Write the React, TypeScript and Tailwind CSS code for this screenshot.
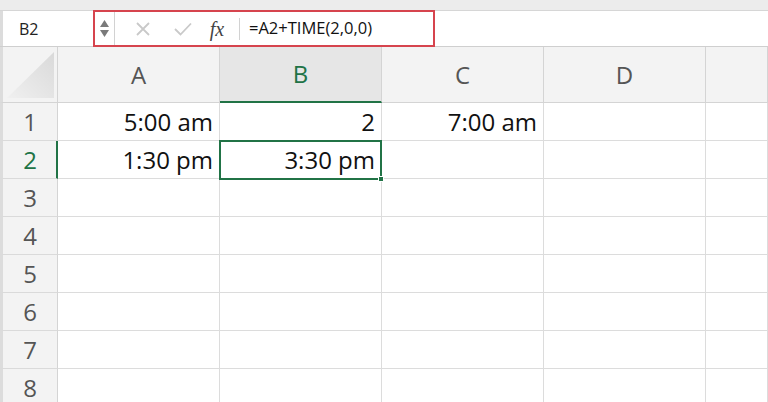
import React from "react";

const cols = ["A", "B", "C", "D", ""];
const rows: string[][] = [
  ["5:00 am", "2", "7:00 am", "", ""],
  ["1:30 pm", "3:30 pm", "", "", ""],
  ["", "", "", "", ""],
  ["", "", "", "", ""],
  ["", "", "", "", ""],
  ["", "", "", "", ""],
  ["", "", "", "", ""],
  ["", "", "", "", ""],
];

export default function App() {
  return (
    <div
      className="w-[768px] h-[402px] overflow-hidden bg-white flex flex-col"
      style={{ fontFamily: '"Open Sans", "Noto Sans", sans-serif' }}
    >
      {/* top strip */}
      <div className="h-[11px] shrink-0 bg-[#ececec] border-b border-[#d6d6d6]" />
      {/* formula bar */}
      <div className="h-[36px] shrink-0 flex bg-white border-b border-[#cfcfcf]">
        <div className="w-[93px] shrink-0 flex items-center pl-[16px] text-[16px] text-[#222] border-l-[3px] border-[#dcdcdc]">
          B2
        </div>
        <div className="w-[342px] shrink-0 flex items-center border-2 border-[#d6444e] -mt-px h-[37px]">
          <div className="w-[20px] h-full flex flex-col items-center justify-center gap-[3px] border-r border-[#d2d2d2]">
            <svg width="9" height="7" viewBox="0 0 9 7">
              <path d="M4.5 0 L9 7 L0 7 Z" fill="#7a7a7a" />
            </svg>
            <svg width="9" height="7" viewBox="0 0 9 7">
              <path d="M0 0 L9 0 L4.5 7 Z" fill="#7a7a7a" />
            </svg>
          </div>
          <div className="w-[40px] flex items-center justify-center ml-[8px]">
            <svg width="16" height="16" viewBox="0 0 16 16">
              <path d="M2 2 L14 14 M14 2 L2 14" stroke="#c9c9c9" strokeWidth="1.8" />
            </svg>
          </div>
          <div className="w-[40px] flex items-center justify-center">
            <svg width="18" height="14" viewBox="0 0 18 14">
              <path d="M1 7 L6.5 12.5 L17 1.5" stroke="#c9c9c9" strokeWidth="1.8" fill="none" />
            </svg>
          </div>
          <div
            className="w-[28px] flex items-center justify-center text-[20px] italic text-[#444]"
            style={{ fontFamily: '"Liberation Serif", "DejaVu Serif", serif' }}
          >
            fx
          </div>
          <div className="w-px h-[22px] bg-[#d2d2d2] ml-[8px]" />
          <div className="pl-[9px] text-[16.5px] text-[#111] whitespace-nowrap">=A2+TIME(2,0,0)</div>
        </div>
        <div className="flex-1" />
      </div>
      {/* grid */}
      <div className="flex-1 grid grid-cols-[58px_162px_162px_162px_162px_1fr] auto-rows-[38px] grid-rows-[56px] content-start">
        {/* corner */}
        <div className="bg-[#f3f3f3] border-l-[3px] border-[#dcdcdc] border-r border-r-[#d4d4d4] border-b border-b-[#d4d4d4] flex items-center justify-center">
          <svg width="47" height="46" viewBox="0 0 47 46">
            <defs>
              <linearGradient id="g" x1="0" y1="1" x2="1" y2="0">
                <stop offset="0" stopColor="#f0f0f0" />
                <stop offset="1" stopColor="#d9d9d9" />
              </linearGradient>
            </defs>
            <path d="M47 0 L47 46 L0 46 Z" fill="url(#g)" />
          </svg>
        </div>
        {cols.map((c, i) => (
          <div
            key={c + i}
            className={
              i === 1
                ? "bg-[#e6e6e6] border-r border-[#d4d4d4] border-b-2 border-b-[#217346] flex items-center justify-center text-[24px] text-[#217346]"
                : "bg-[#f3f3f3] border-r border-[#d4d4d4] border-b border-b-[#d4d4d4] flex items-center justify-center text-[24px] text-[#555]"
            }
          >
            {c}
          </div>
        ))}
        {rows.map((r, ri) => (
          <React.Fragment key={ri}>
            <div
              className={
                ri === 1
                  ? "bg-[#f3f3f3] border-l-[3px] border-l-[#dcdcdc] border-r-2 border-r-[#217346] border-b border-b-[#dadada] flex items-center justify-center text-[24px] text-[#217346] pl-[1px]"
                  : "bg-[#f3f3f3] border-l-[3px] border-l-[#dcdcdc] border-r border-r-[#d4d4d4] border-b border-b-[#dadada] flex items-center justify-center text-[24px] text-[#555]"
              }
            >
              {ri + 1}
            </div>
            {r.map((v, ci) => {
              const selected = ri === 1 && ci === 1;
              return (
                <div
                  key={ci}
                  className={
                    selected
                      ? "relative -ml-px border-2 border-[#217346] -mt-px h-[40px] flex items-center justify-end pr-[5px] text-[24px] text-[#111] bg-white z-10"
                      : "border-r border-[#dcdcdc] border-b border-b-[#dcdcdc] flex items-center justify-end pr-[6px] text-[24px] text-[#111] whitespace-nowrap"
                  }
                >
                  {v}
                  {selected && (
                    <div className="absolute -right-[4px] -bottom-[4px] w-[6px] h-[6px] bg-[#217346] border border-white" />
                  )}
                </div>
              );
            })}
          </React.Fragment>
        ))}
      </div>
    </div>
  );
}
